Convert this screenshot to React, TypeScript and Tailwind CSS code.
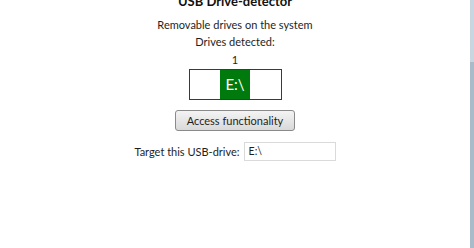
export default function App() {
  return (
    <div
      className="flex h-[248px] w-[474px] overflow-hidden bg-white text-[#1e1e1e]"
      style={{ fontFamily: 'Lato, "Open Sans", sans-serif' }}
    >
      <div className="flex flex-1 flex-col items-center">
        <div className="mt-[-9px] h-[20px] text-[13px] font-bold leading-[20px] text-[#111]">USB Drive-detector</div>
        <div className="mt-[6px] text-[11px] leading-[16px]">Removable drives on the system</div>
        <div className="mt-[1px] text-[11px] leading-[16px]">Drives detected:</div>
        <div className="mt-[2px] text-[11px] leading-[16px]">1</div>
        <div className="mt-px flex h-[31px] w-[93px] justify-center border-[1.5px] border-[#3a3a3a]">
          <div className="flex w-[30px] items-center justify-center bg-[#007a0c] text-[15px] text-white">E:\</div>
        </div>
        <button className="mt-[10px] h-[21px] w-[120px] rounded-[3px] border border-[#8a8a8a] bg-gradient-to-b from-[#f4f4f4] to-[#d9d9d9] text-[11px] leading-[18px] text-[#1e1e1e]">
          Access functionality
        </button>
        <div className="mt-[11px] flex items-center gap-[4px]">
          <span className="text-[11px] leading-[16px]">Target this USB-drive:</span>
          <div className="flex h-[19px] w-[92px] items-center border border-[#dadada] px-[4px] text-[10.5px]">E:\</div>
        </div>
      </div>
      <div className="flex w-[4px] flex-col">
        <div className="h-[62px] bg-[#c9d6e0]" />
        <div className="flex-1 bg-[#a9bac8]" />
      </div>
    </div>
  );
}
